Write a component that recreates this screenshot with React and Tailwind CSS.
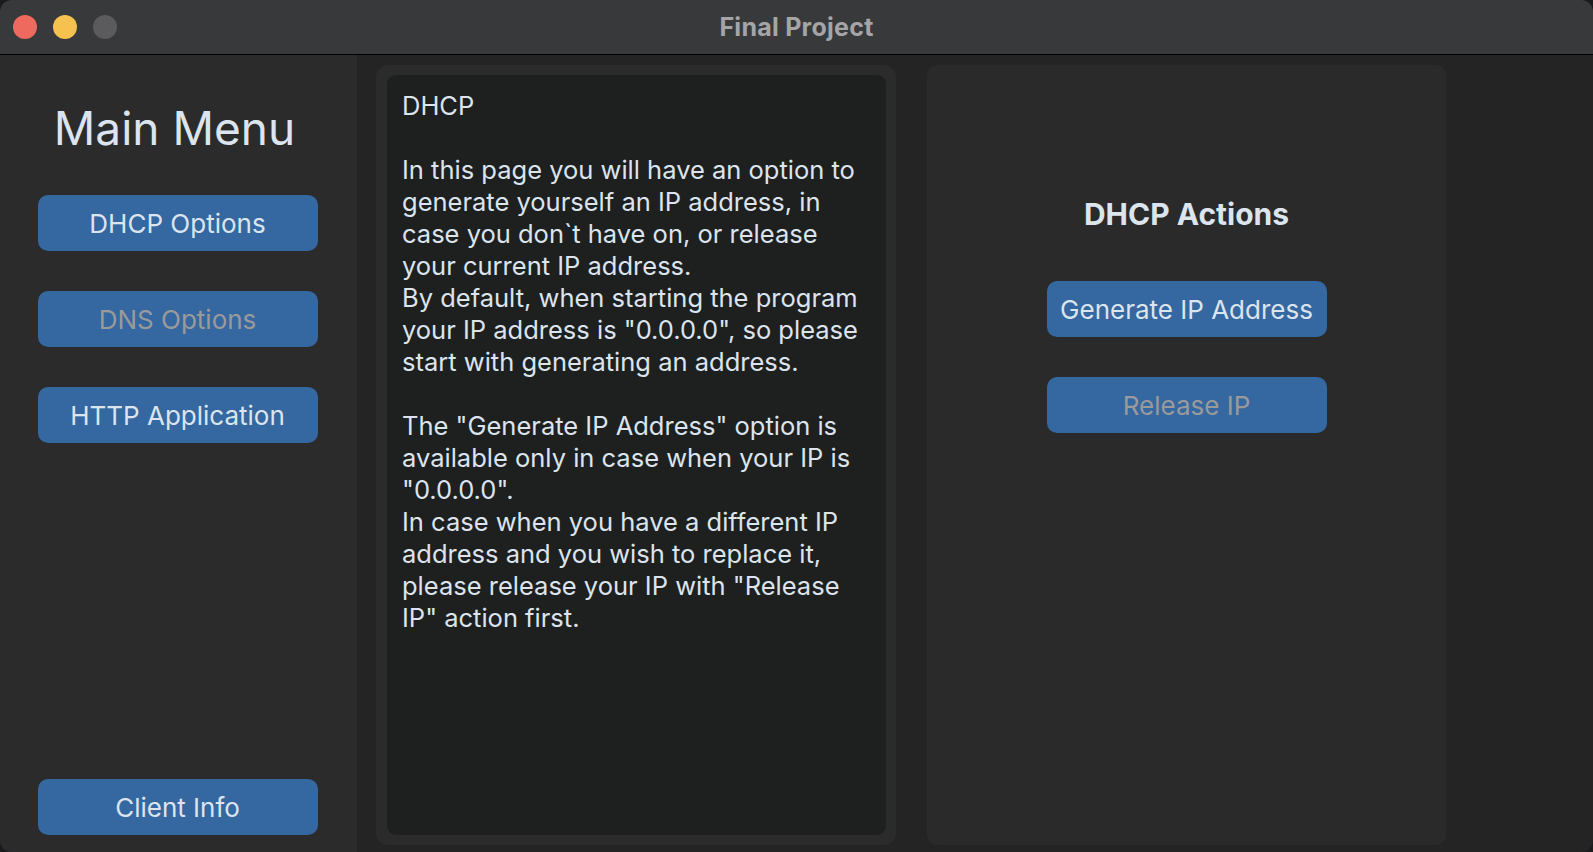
const strFont = { fontFamily: "Inter, 'Open Sans', 'Liberation Sans', sans-serif" };

function MenuButton({ strText, bDisabled }) {
  return (
    <button
      type="button"
      className={`w-[280px] h-[56px] rounded-[10px] bg-[#3568a0] text-[26px] ${
        bDisabled ? "text-[#9a9a9a]" : "text-[#dce4ee]"
      }`}
    >
      {strText}
    </button>
  );
}

const arrLines = [
  "DHCP",
  "",
  "In this page you will have an option to",
  "generate yourself an IP address, in",
  "case you don`t have on, or release",
  "your current IP address.",
  "By default, when starting the program",
  'your IP address is "0.0.0.0", so please',
  "start with generating an address.",
  "",
  'The "Generate IP Address" option is',
  "available only in case when your IP is",
  '"0.0.0.0".',
  "In case when you have a different IP",
  "address and you wish to replace it,",
  'please release your IP with "Release',
  'IP" action first.',
];

export default function App() {
  return (
    <div className="w-[1593px] h-[852px] bg-[#1b1b1d] overflow-hidden" style={strFont}>
      <div className="flex flex-col h-full rounded-[12px] overflow-hidden bg-[#242424]">
        {/* title bar */}
        <div className="h-[55px] shrink-0 bg-[#38393b] border-b border-black grid grid-cols-[1fr_auto_1fr] items-center">
          <div className="flex items-center gap-[16px] pl-[13px]">
            <span className="w-[24px] h-[24px] rounded-full bg-[#ee6a5f]" />
            <span className="w-[24px] h-[24px] rounded-full bg-[#f5c14f]" />
            <span className="w-[24px] h-[24px] rounded-full bg-[#5b5b5d]" />
          </div>
          <div className="text-[25px] font-bold tracking-[0.01em] text-[#a5a5a7] pt-[1px]">Final Project</div>
          <div />
        </div>

        <div className="flex flex-1 min-h-0">
          {/* sidebar */}
          <div className="w-[357px] shrink-0 bg-[#2b2b2b] flex flex-col items-center pt-[45px] pb-[17px] pr-[2px]">
            <div className="text-[46px] leading-[56px] text-[#dce4ee] mb-[39px] pr-[6px]">Main Menu</div>
            <div className="flex flex-col gap-[40px]">
              <MenuButton strText="DHCP Options" />
              <MenuButton strText="DNS Options" bDisabled />
              <MenuButton strText="HTTP Application" />
            </div>
            <div className="flex-1" />
            <MenuButton strText="Client Info" />
          </div>

          {/* content */}
          <div className="flex-1 flex gap-[31px] pl-[19px] pt-[10px] pb-[7px]">
            <div className="w-[520px] bg-[#2b2b2b] rounded-[12px] p-[10px] pl-[11px]">
              <div className="h-full bg-[#1e1f1f] rounded-[9px] pl-[15px] pt-[15px] text-[25.5px] leading-[32px] text-[#dce4ee]">
                {arrLines.map((strLine, i) => (
                  <div key={i} className="whitespace-pre h-[32px]">
                    {strLine}
                  </div>
                ))}
              </div>
            </div>
            <div className="w-[519px] bg-[#2a2a2a] rounded-[10px] flex flex-col items-center pt-[131px] gap-[40px]">
              <div className="text-[30px] font-bold leading-[36px] text-[#dce4ee] mb-[9px]">DHCP Actions</div>
              <MenuButton strText="Generate IP Address" />
              <MenuButton strText="Release IP" bDisabled />
            </div>
          </div>
        </div>
      </div>
    </div>
  );
}
